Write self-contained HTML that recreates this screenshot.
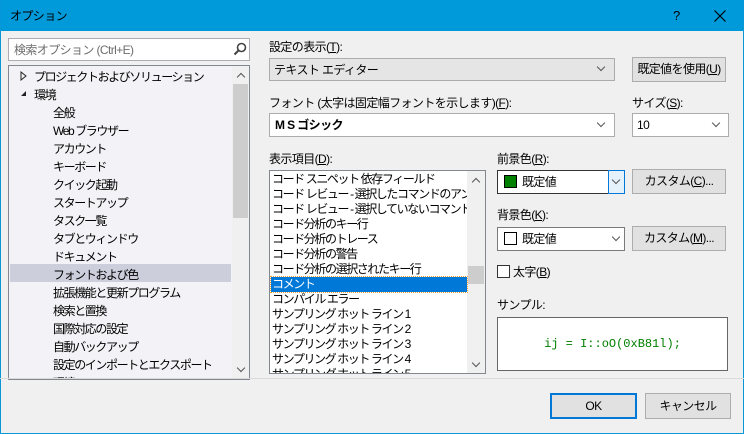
<!DOCTYPE html>
<html><head><meta charset="utf-8"><style>
*{box-sizing:border-box;margin:0;padding:0}
body{width:744px;height:434px;overflow:hidden;background:#F0F0F0;font-family:"Liberation Sans","Noto Sans CJK JP",sans-serif;font-size:12px;color:#000;position:relative;letter-spacing:-0.6px}
.a{position:absolute}
.win{left:0;top:0;width:744px;height:434px;border:1px solid #0A97D9;border-top:none}
.title{left:0;top:0;width:744px;height:31px;background:#009ADB;color:#000}
.lbl{position:absolute;font-size:12px;line-height:14px;white-space:nowrap}
.box{position:absolute;border:1px solid #7A7A7A;background:#fff}
.btn{position:absolute;border:1px solid #ADADAD;background:#E1E1E1;text-align:center;font-size:12px}
.chev{position:absolute;width:6px;height:6px;border-right:1px solid #555;border-bottom:1px solid #555;transform:rotate(45deg)}
.lst{letter-spacing:-1.4px}
u{text-decoration:underline}
</style></head><body>
<div class="a title"><span class="lbl" style="left:10px;top:9px">オプション</span>
<span class="lbl" style="left:673px;top:9px;font-size:13px">?</span>
<svg class="a" style="left:714px;top:10px" width="12" height="12"><path d="M0.5 0.5 L11.5 11.5 M11.5 0.5 L0.5 11.5" stroke="#000" stroke-width="1.2"/></svg></div>
<div class="a win"></div>

<div class="box" style="left:8px;top:38px;width:242px;height:23px;border-color:#ABADB3">
<span class="lbl" style="left:5px;top:4px;color:#6D6D6D">検索オプション (Ctrl+E)</span>
<svg class="a" style="left:224px;top:3px" width="14" height="14"><circle cx="8.5" cy="5.5" r="4" fill="none" stroke="#444" stroke-width="1.6"/><line x1="5.5" y1="8.5" x2="1.5" y2="12.5" stroke="#444" stroke-width="2"/></svg></div>

<div class="box lst" style="left:8px;top:65px;width:242px;height:315px;background:#F3F3F7;border-color:#828790;overflow:hidden">
<div class="a" style="left:223px;top:0;width:17px;height:313px;background:#F0F0F0"></div>
<div class="a" style="left:224px;top:18px;width:15px;height:134px;background:#CDCDCD"></div>
<div class="chev" style="left:229px;top:8px;transform:rotate(225deg)"></div>
<div class="chev" style="left:229px;top:299px"></div>
<div class="a" style="left:1px;top:198px;width:221px;height:18px;background:#CCCEDB"></div>
<svg class="a" style="left:11px;top:5px" width="8" height="10"><path d="M1 1 L6 5 L1 9 Z" fill="none" stroke="#222"/></svg>
<svg class="a" style="left:11px;top:24px" width="8" height="8"><path d="M6 1 L6 6 L1 6 Z" fill="#222"/></svg>
<div style="position:absolute;left:25px;top:2px;line-height:18px">
<div>プロジェクトおよびソリューション</div><div>環境</div></div>
<div style="position:absolute;left:44px;top:38px;line-height:18px;white-space:nowrap">
<div>全般</div><div>Web ブラウザー</div><div>アカウント</div><div>キーボード</div><div>クイック起動</div><div>スタートアップ</div><div>タスク一覧</div><div>タブとウィンドウ</div><div>ドキュメント</div><div>フォントおよび色</div><div>拡張機能と更新プログラム</div><div>検索と置換</div><div>国際対応の設定</div><div>自動バックアップ</div><div>設定のインポートとエクスポート</div><div>環境</div></div>
</div>

<span class="lbl" style="left:269px;top:40px">設定の表示(<u>T</u>):</span>
<div class="box" style="left:269px;top:58px;width:346px;height:23px;background:#E5E5E5;border-color:#ACACAC"><span class="lbl" style="left:4px;top:4px">テキスト エディター</span><div class="chev" style="left:328px;top:5px"></div></div>
<div class="btn" style="left:632px;top:57px;width:94px;height:25px;line-height:23px">既定値を使用(<u>U</u>)</div>

<span class="lbl" style="left:269px;top:96px">フォント (太字は固定幅フォントを示します)(<u>F</u>):</span>
<div class="box" style="left:269px;top:113px;width:346px;height:24px;border-color:#ACACAC"><span class="lbl" style="left:5px;top:4px;font-weight:bold">M S ゴシック</span><div class="chev" style="left:328px;top:6px"></div></div>
<span class="lbl" style="left:632px;top:96px">サイズ(<u>S</u>):</span>
<div class="box" style="left:632px;top:113px;width:97px;height:24px;border-color:#ACACAC"><span class="lbl" style="left:4px;top:4px">10</span><div class="chev" style="left:80px;top:6px"></div></div>

<span class="lbl" style="left:269px;top:152px">表示項目(<u>D</u>):</span>
<div class="box lst" style="left:269px;top:170px;width:217px;height:204px;border-color:#828790;overflow:hidden">
<div class="a" style="left:197px;top:0;width:18px;height:202px;background:#F0F0F0"></div>
<div class="a" style="left:198px;top:95px;width:16px;height:18px;background:#CDCDCD"></div>
<div class="chev" style="left:203px;top:8px;transform:rotate(225deg)"></div>
<div class="chev" style="left:203px;top:189px"></div>
<div class="a" style="left:1px;top:106px;width:196px;height:15px;background:#0078D7;outline:1px dotted #F0A030"></div>
<div style="position:absolute;left:2px;top:1px;line-height:15px;white-space:nowrap;width:195px;overflow:hidden">
<div>コード スニペット 依存フィールド</div><div>コード レビュー - 選択したコマンドのアンカー</div><div>コード レビュー - 選択していないコマンドのア</div><div>コード分析のキー行</div><div>コード分析のトレース</div><div>コード分析の警告</div><div>コード分析の選択されたキー行</div><div style="color:#fff">コメント</div><div>コンパイル エラー</div><div>サンプリング ホット ライン 1</div><div>サンプリング ホット ライン 2</div><div>サンプリング ホット ライン 3</div><div>サンプリング ホット ライン 4</div><div>サンプリング ホット ライン 5</div></div>
</div>

<span class="lbl" style="left:497px;top:152px">前景色(<u>R</u>):</span>
<div class="box" style="left:497px;top:170px;width:128px;height:24px;border-color:#333"><div class="a" style="left:6px;top:4px;width:13px;height:13px;background:#008000;border:1px solid #000"></div><span class="lbl" style="left:24px;top:4px">既定値</span>
<div class="a" style="left:110px;top:-1px;width:17px;height:24px;background:#E5F1FB;border:1px solid #0078D7"></div><div class="chev" style="left:115px;top:6px"></div></div>
<div class="btn" style="left:632px;top:169px;width:94px;height:25px;line-height:23px">カスタム(<u>C</u>)...</div>

<span class="lbl" style="left:497px;top:208px">背景色(<u>K</u>):</span>
<div class="box" style="left:497px;top:227px;width:128px;height:24px;border-color:#7A7A7A"><div class="a" style="left:6px;top:4px;width:13px;height:13px;background:#fff;border:1px solid #000"></div><span class="lbl" style="left:24px;top:4px">既定値</span><div class="chev" style="left:115px;top:6px"></div></div>
<div class="btn" style="left:632px;top:226px;width:94px;height:25px;line-height:23px">カスタム(<u>M</u>)...</div>

<div class="box" style="left:497px;top:265px;width:13px;height:13px;border-color:#333"></div>
<span class="lbl" style="left:513px;top:265px">太字(<u>B</u>)</span>

<span class="lbl" style="left:497px;top:298px">サンプル:</span>
<div class="box" style="left:497px;top:317px;width:231px;height:54px;border-color:#666"><span class="lbl" style="left:0;width:229px;text-align:center;top:19px;color:#008000;font-family:'Liberation Mono',monospace;font-size:12px;letter-spacing:0">ij = I::oO(0xB81l);</span></div>

<div class="a" style="left:0;top:378px;width:744px;height:1px;background:#DADADA"></div>

<div class="btn" style="left:550px;top:393px;width:87px;height:26px;line-height:22px;border:2px solid #0078D7">OK</div>
<div class="btn" style="left:645px;top:393px;width:86px;height:26px;line-height:24px">キャンセル</div>
</body></html>
